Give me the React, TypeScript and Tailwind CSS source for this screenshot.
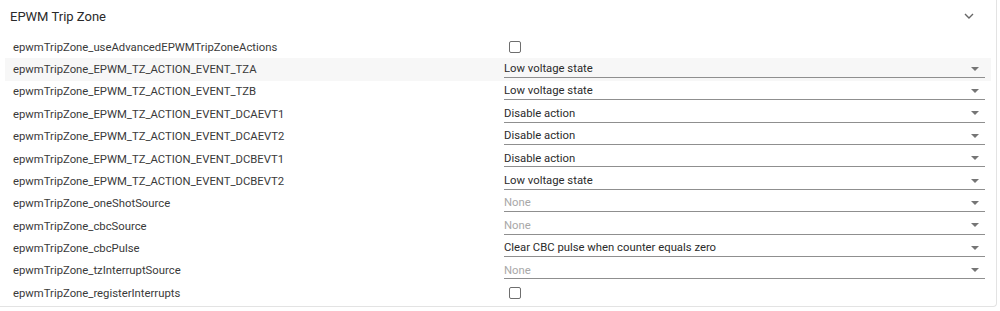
import React from "react";

type Row = { label: string; kind: "check" | "select"; value?: string; placeholder?: boolean; hover?: boolean };

const rows: Row[] = [
  { label: "epwmTripZone_useAdvancedEPWMTripZoneActions", kind: "check" },
  { label: "epwmTripZone_EPWM_TZ_ACTION_EVENT_TZA", kind: "select", value: "Low voltage state", hover: true },
  { label: "epwmTripZone_EPWM_TZ_ACTION_EVENT_TZB", kind: "select", value: "Low voltage state" },
  { label: "epwmTripZone_EPWM_TZ_ACTION_EVENT_DCAEVT1", kind: "select", value: "Disable action" },
  { label: "epwmTripZone_EPWM_TZ_ACTION_EVENT_DCAEVT2", kind: "select", value: "Disable action" },
  { label: "epwmTripZone_EPWM_TZ_ACTION_EVENT_DCBEVT1", kind: "select", value: "Disable action" },
  { label: "epwmTripZone_EPWM_TZ_ACTION_EVENT_DCBEVT2", kind: "select", value: "Low voltage state" },
  { label: "epwmTripZone_oneShotSource", kind: "select", value: "None", placeholder: true },
  { label: "epwmTripZone_cbcSource", kind: "select", value: "None", placeholder: true },
  { label: "epwmTripZone_cbcPulse", kind: "select", value: "Clear CBC pulse when counter equals zero" },
  { label: "epwmTripZone_tzInterruptSource", kind: "select", value: "None", placeholder: true },
  { label: "epwmTripZone_registerInterrupts", kind: "check" },
];

export default function App() {
  return (
    <div className="w-[1000px] h-[311px] bg-white" style={{ fontFamily: "Roboto, 'Liberation Sans', sans-serif" }}>
      <div className="w-[997px] h-[307px] border-r border-b border-[#e3e3e3] rounded-br-[4px] flex flex-col">
        <div className="h-[36px] flex items-center justify-between pl-[10px] pr-[22px]">
          <span className="text-[13px] text-[#2a2a2a] leading-none -mt-[3px]">EPWM Trip Zone</span>
          <svg width="10" height="6" viewBox="0 0 10 6" className="-mt-[4px]">
            <path d="M1 1 L5 5 L9 1" fill="none" stroke="#666" strokeWidth="1.4" />
          </svg>
        </div>
        <div className="flex flex-col pl-[5px] pr-[5px]">
          {rows.map((r) => (
            <div
              key={r.label}
              className={`h-[22.4px] flex items-center ${r.hover ? "bg-[#f7f7f7]" : ""}`}
            >
              <div className="w-[499px] pl-[8px] text-[11.3px] text-[#3a3a3a] leading-none">{r.label}</div>
              {r.kind === "check" ? (
                <div className="pl-[5px] flex items-center">
                  <div className="w-[12px] h-[12px] border-[1.5px] border-[#6e6e6e] rounded-[2px] bg-white" />
                </div>
              ) : (
                <div className="w-[481px] h-full flex items-start pt-[2px]">
                  <div className="w-full h-[17.5px] border-b border-[#8f8f8f] flex items-center justify-between">
                    <span
                      className={`text-[11.3px] leading-none ${r.placeholder ? "text-[#a8a8a8]" : "text-[#2b2b2b]"}`}
                    >
                      {r.value}
                    </span>
                    <svg width="8" height="4" viewBox="0 0 8 4" className="mr-[6px]">
                      <path d="M0 0 L8 0 L4 4 Z" fill="#757575" />
                    </svg>
                  </div>
                </div>
              )}
            </div>
          ))}
        </div>
      </div>
    </div>
  );
}
